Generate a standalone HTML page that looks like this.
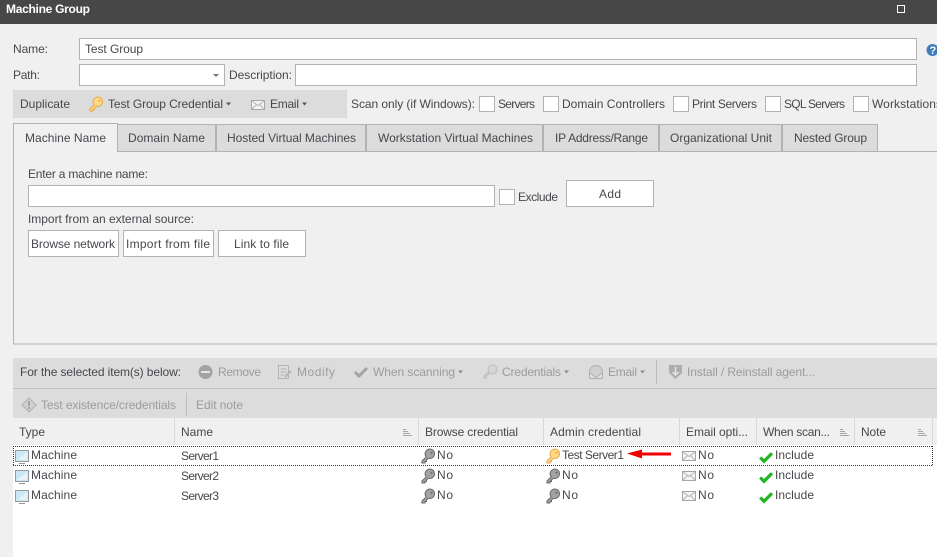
<!DOCTYPE html>
<html><head><meta charset="utf-8"><title>Machine Group</title>
<style>
html,body{margin:0;padding:0;background:#f0f0f0;width:937px;height:557px;overflow:hidden}
svg{display:block}
text{font-family:"Liberation Sans",sans-serif;font-size:12px;fill:#47474d}
.d{fill:#9c9c9c}
.b{fill:#fff;stroke:#b2b2b2;stroke-width:1;shape-rendering:crispEdges}
.t{fill:#dcdcdc;stroke:#b2b2b2;stroke-width:1;shape-rendering:crispEdges}
.l{shape-rendering:crispEdges}
</style></head><body>
<svg xmlns="http://www.w3.org/2000/svg" width="937" height="557" viewBox="0 0 937 557">
<defs>
<g id="kg"><path d="M5.200 7.800L1 12V14H4V12.500H5.500V11L7.500 9.300A4.700 4.700 0 1 0 5.200 7.800Z" fill="#a2a2a2" stroke="#686868"/><circle cx="10.500" cy="3.800" r="1" fill="#686868"/></g>
<g id="ky"><path d="M5.200 7.800L1 12V14H4V12.500H5.500V11L7.500 9.300A4.700 4.700 0 1 0 5.200 7.800Z" fill="#ffd888" stroke="#e6a63f"/><circle cx="10.500" cy="3.800" r="1" fill="#e6a63f"/></g>
<g id="m"><rect x=".5" y=".5" width="13" height="9" fill="#f4f4f4" stroke="#a6a6a6" class="l"/><path d="M1 1l6 4.500L13 1M1 9l4.500-4.500M13 9L8.500 4.500" fill="none" stroke="#b4b4b4"/></g>
<g id="c"><path d="M1.200 6.500L5 10.300L13 2.300" fill="none" stroke="#22b422" stroke-width="3.200"/></g>
<g id="pc"><rect x=".5" y=".5" width="13" height="11" fill="#c8e8f3" stroke="#9a9a9a" class="l"/><path d="M2 10L12 2V10Z" fill="#e6f4f9"/><rect x="4" y="13" width="6" height="1" fill="#9a9a9a"/></g>
<g id="s"><path d="M0 .5h3M0 2.500h5M0 4.500h7M0 6.500h9" stroke="#a6a6a6" fill="none" class="l"/></g>
</defs>

<rect width="937" height="557" fill="#f0f0f0"/>
<rect width="937" height="24" fill="#474747"/>
<text x="6" y="13" textLength="84" style="fill:#fff;font-weight:bold">Machine Group</text>
<rect x="897.500" y="5.500" width="7" height="7" fill="none" stroke="#fff" class="l"/>

<text x="13" y="53" textLength="35">Name:</text>
<rect class="b" x="79.500" y="38.500" width="837" height="21"/>
<text x="85" y="53" textLength="58">Test Group</text>
<circle cx="932.500" cy="50" r="6" fill="#3f7cb8"/><text x="929.500" y="54" style="fill:#fff;font-weight:bold;font-size:11px">?</text>

<text x="13" y="79" textLength="27">Path:</text>
<rect class="b" x="79.500" y="64.500" width="145" height="21"/>
<path d="M213 74h6l-3 3z" fill="#777"/>
<text x="229" y="79" textLength="63">Description:</text>
<rect class="b" x="295.500" y="64.500" width="621" height="21"/>

<rect x="13" y="90" width="334" height="28" fill="#dcdcdc"/>
<text x="20" y="108" textLength="50">Duplicate</text>
<use href="#ky" x="89" y="97"/>
<text x="108" y="108" textLength="115">Test Group Credential</text>
<path d="M226 102.500h5l-2.500 3z" fill="#555"/>
<use href="#m" x="251" y="100"/>
<text x="270" y="108" textLength="29">Email</text>
<path d="M302 102.500h5l-2.500 3z" fill="#555"/>

<text x="351" y="108" textLength="124">Scan only (if Windows):</text>
<rect class="b" x="479.500" y="96.500" width="15" height="15"/>
<text x="498" y="108" textLength="37">Servers</text>
<rect class="b" x="543.500" y="96.500" width="15" height="15"/>
<text x="562" y="108" textLength="103">Domain Controllers</text>
<rect class="b" x="673.500" y="96.500" width="15" height="15"/>
<text x="692" y="108" textLength="65">Print Servers</text>
<rect class="b" x="765.500" y="96.500" width="15" height="15"/>
<text x="784" y="108" textLength="61">SQL Servers</text>
<rect class="b" x="853.500" y="96.500" width="15" height="15"/>
<text x="872" y="108" textLength="70">Workstations</text>

<!-- tabs -->
<rect x="13.500" y="151.500" width="930" height="192.500" fill="#f0f0f0" stroke="#b2b2b2" class="l"/>
<rect class="t" x="117.500" y="124.500" width="99" height="27"/>
<rect class="t" x="216.500" y="124.500" width="150" height="27"/>
<rect class="t" x="366.500" y="124.500" width="177" height="27"/>
<rect class="t" x="543.500" y="124.500" width="116" height="27"/>
<rect class="t" x="659.500" y="124.500" width="123" height="27"/>
<rect class="t" x="782.500" y="124.500" width="95" height="27"/>
<path d="M215.500 125v26M365.500 125v26M542.500 125v26M658.500 125v26M781.500 125v26" stroke="#b2b2b2" fill="none" class="l"/>
<path d="M13.500 152V123.500H117.500V152" fill="#f0f0f0" stroke="#b2b2b2" class="l"/>
<rect x="14" y="150" width="103" height="3" fill="#f0f0f0"/>
<text x="25" y="142" textLength="81">Machine Name</text>
<text x="128" y="142" textLength="77">Domain Name</text>
<text x="227" y="142" textLength="129">Hosted Virtual Machines</text>
<text x="378" y="142" textLength="155">Workstation Virtual Machines</text>
<text x="555" y="142" textLength="93">IP Address/Range</text>
<text x="670" y="142" textLength="102">Organizational Unit</text>
<text x="794" y="142" textLength="73">Nested Group</text>

<text x="28" y="178" textLength="120">Enter a machine name:</text>
<rect class="b" x="28.500" y="185.500" width="466" height="21"/>
<rect class="b" x="499.500" y="189.500" width="15" height="15"/>
<text x="518" y="201" textLength="40">Exclude</text>
<rect class="b" x="566.500" y="180.500" width="87" height="26"/>
<text x="599" y="198" textLength="22">Add</text>
<text x="28" y="223" textLength="166">Import from an external source:</text>
<rect class="b" x="28.500" y="230.500" width="90" height="26"/>
<text x="31" y="248" textLength="84">Browse network</text>
<rect class="b" x="123.500" y="230.500" width="90" height="26"/>
<text x="126" y="248" textLength="84">Import from file</text>
<rect class="b" x="218.500" y="230.500" width="87" height="26"/>
<text x="234" y="248" textLength="55">Link to file</text>

<!-- bottom toolbar -->
<rect x="13" y="358" width="924" height="60" fill="#dcdcdc"/>
<rect x="13" y="388" width="924" height="1" fill="#c2c2c2"/>
<text x="20" y="376" textLength="161">For the selected item(s) below:</text>
<circle cx="205.500" cy="372" r="7" fill="#a3a3a3"/><rect x="201" y="371" width="9" height="2" fill="#e4e4e4"/>
<text class="d" x="218" y="376" textLength="43">Remove</text>
<path d="M278.500 365.500h10v13h-10zM280.500 369h6M280.500 372h6M280.500 375h4" fill="none" stroke="#b4b4b4"/><path d="M285 377l6-6" stroke="#b4b4b4" stroke-width="2"/>
<text class="d" x="297" y="376" textLength="38">Modify</text>
<path d="M355 372l4 4 8-8" fill="none" stroke="#a3a3a3" stroke-width="3"/>
<text class="d" x="373" y="376" textLength="82">When scanning</text>
<path d="M458 370.500h5l-2.500 3z" fill="#8c8c8c"/>
<path d="M485 379v-3l5-4" fill="none" stroke="#c4c4c4" stroke-width="3"/><circle cx="492.500" cy="369.500" r="4.500" fill="#d6d6d6" stroke="#bcbcbc"/>
<text class="d" x="502" y="376" textLength="59">Credentials</text>
<path d="M564 370.500h5l-2.500 3z" fill="#8c8c8c"/>
<circle cx="596" cy="372" r="6.500" fill="#d0d0d0" stroke="#b0b0b0"/><path d="M589.500 372.500l6.500 5 6.500-5v6h-13z" fill="#ddd" stroke="#b0b0b0"/>
<text class="d" x="608" y="376" textLength="29">Email</text>
<path d="M640 370.500h5l-2.500 3z" fill="#8c8c8c"/>
<rect x="656" y="360" width="1" height="24" fill="#bdbdbd"/>
<path d="M669 365h13v8l-6.500 6-6.500-6z" fill="#adadad"/><path d="M675.500 367v7M672.500 372l3 3 3-3" fill="none" stroke="#e6e6e6" stroke-width="1.500"/>
<text class="d" x="687" y="376" textLength="128">Install / Reinstall agent...</text>

<path d="M29 398l7 7-7 7-7-7z" fill="#d0d0d0" stroke="#b0b0b0"/><rect x="28" y="401" width="2" height="5" fill="#a4a4a4"/><rect x="28" y="407" width="2" height="2" fill="#a4a4a4"/>
<text class="d" x="41" y="409" textLength="135">Test existence/credentials</text>
<rect x="186" y="393" width="1" height="23" fill="#bdbdbd"/>
<text class="d" x="196" y="409" textLength="47">Edit note</text>

<!-- table -->
<rect x="13" y="418" width="924" height="27" fill="#f0f0f0"/>
<rect x="13" y="445" width="924" height="112" fill="#fff"/>
<path d="M174.500 418v27M418.500 418v27M543.500 418v27M679.500 418v27M756.500 418v27M854.500 418v27M932.500 418v27" stroke="#d9d9d9" fill="none" class="l"/>
<text x="19" y="436" textLength="26">Type</text>
<text x="181" y="436" textLength="32">Name</text>
<text x="425" y="436" textLength="93">Browse credential</text>
<text x="550" y="436" textLength="91">Admin credential</text>
<text x="686" y="436" textLength="62">Email opti...</text>
<text x="763" y="436" textLength="67">When scan...</text>
<text x="861" y="436" textLength="25">Note</text>
<use href="#s" x="403" y="429"/><use href="#s" x="840" y="429"/><use href="#s" x="918" y="429"/>

<path d="M13 446.500H933M13 465.500H933" stroke="#333" stroke-dasharray="1 1" fill="none"/>
<path d="M13.500 446V466M932.500 446V466" stroke="#333" stroke-dasharray="1 1" fill="none"/>

<!-- row 1 -->
<use href="#pc" x="15" y="450"/><text x="31" y="459" textLength="46">Machine</text>
<text x="181" y="460" textLength="38">Server1</text>
<use href="#kg" x="421" y="449"/><text x="437" y="459" textLength="16">No</text>
<use href="#ky" x="546" y="449"/><text x="562" y="459" textLength="62">Test Server1</text>
<path d="M627 453.500l15-4v3h29v3h-29v3z" fill="#f00000"/>
<use href="#m" x="682" y="451"/><text x="698" y="459" textLength="16">No</text>
<use href="#c" x="759" y="451"/><text x="775" y="459" textLength="39">Include</text>
<!-- row 2 -->
<use href="#pc" x="15" y="470"/><text x="31" y="479" textLength="46">Machine</text>
<text x="181" y="480" textLength="38">Server2</text>
<use href="#kg" x="421" y="469"/><text x="437" y="479" textLength="16">No</text>
<use href="#kg" x="546" y="469"/><text x="562" y="479" textLength="16">No</text>
<use href="#m" x="682" y="471"/><text x="698" y="479" textLength="16">No</text>
<use href="#c" x="759" y="471"/><text x="775" y="479" textLength="39">Include</text>
<!-- row 3 -->
<use href="#pc" x="15" y="490"/><text x="31" y="499" textLength="46">Machine</text>
<text x="181" y="500" textLength="38">Server3</text>
<use href="#kg" x="421" y="489"/><text x="437" y="499" textLength="16">No</text>
<use href="#kg" x="546" y="489"/><text x="562" y="499" textLength="16">No</text>
<use href="#m" x="682" y="491"/><text x="698" y="499" textLength="16">No</text>
<use href="#c" x="759" y="491"/><text x="775" y="499" textLength="39">Include</text>
</svg>
</body></html>
